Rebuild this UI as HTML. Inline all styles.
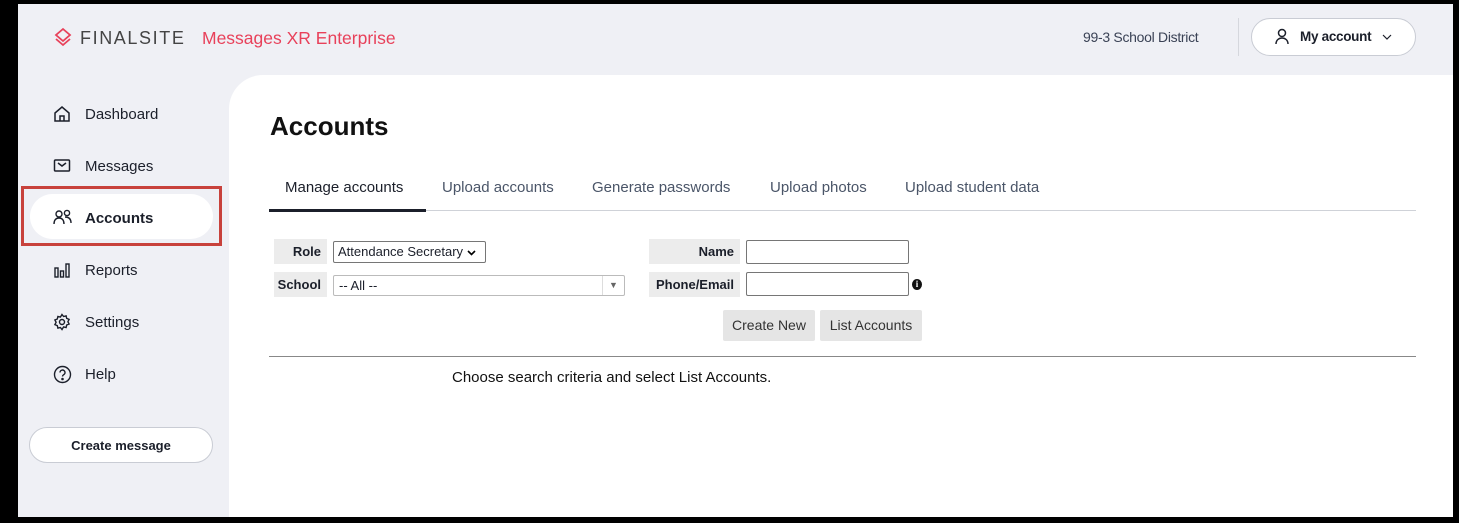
<!DOCTYPE html>
<html><head><meta charset="utf-8"><style>
*{box-sizing:border-box;margin:0;padding:0}
body{width:1459px;height:523px;background:#000;position:relative;overflow:hidden;font-family:"Liberation Sans",sans-serif;color:#1b1f2a}
.app{position:absolute;left:18px;top:4px;width:1435px;height:513px;background:#eff0f5}
.a{position:absolute;white-space:nowrap}
.main{position:absolute;left:229px;top:75px;width:1224px;height:442px;background:#fff;border-top-left-radius:34px}
.nav{position:absolute;left:53px;font-size:15px;color:#1b1f2a}
.nav svg{position:absolute;left:0;top:0}
.nav span{position:absolute;left:32px;top:1px}
.lbl{position:absolute;background:#ececec;font-weight:bold;font-size:13px;text-align:right;padding-right:6px;line-height:25px;height:25px}
.inp{position:absolute;border:1px solid #767676;border-radius:2px;background:#fff;height:24px}
.btn{position:absolute;background:#e5e5e5;font-size:14px;color:#333;height:31px;line-height:31px;text-align:center;border-radius:2px}
.tab{position:absolute;top:179px;font-size:15px;color:#4a5568}
</style></head><body>
<div class="app"></div>
<!-- header -->
<svg class="a" style="left:53px;top:27px" width="20" height="21" viewBox="0 0 20 21" fill="none" stroke="#e8415a" stroke-width="1.8"><path d="M10 2L17 8 10 14 3 8Z"/><path d="M3 12L10 18 17 12"/></svg>
<div class="a" style="left:80px;top:28px;font-size:18px;letter-spacing:1.6px;color:#444">FINALSITE</div>
<div class="a" style="left:202px;top:28px;font-size:17.5px;color:#e8415a">Messages XR Enterprise</div>
<div class="a" style="left:1083px;top:29px;font-size:14px;color:#3a4255;letter-spacing:-0.3px">99-3 School District</div>
<div class="a" style="left:1238px;top:18px;width:1px;height:38px;background:#d5d7dd"></div>
<div class="a" style="left:1251px;top:18px;width:165px;height:38px;border:1px solid #c9ccd4;border-radius:19px;background:#fff"></div>
<svg class="a" style="left:1274px;top:28px" width="16" height="17" viewBox="0 0 16 17" fill="none" stroke="#1b1f2a" stroke-width="1.5"><circle cx="8" cy="5" r="3.5"/><path d="M2 16c0-4 3-6 6-6s6 2 6 6"/></svg>
<div class="a" style="left:1300px;top:29px;font-size:13.5px;font-weight:bold;letter-spacing:-0.3px">My account</div>
<svg class="a" style="left:1382px;top:34px" width="10" height="6" viewBox="0 0 10 6" fill="none" stroke="#1b1f2a" stroke-width="1.2"><path d="M1 1l4 4 4-4"/></svg>
<!-- sidebar -->
<div class="nav" style="top:105px"><svg width="18" height="18" viewBox="0 0 18 18" fill="none" stroke="#1b1f2a" stroke-width="1.5"><path d="M2 8L9 2l7 6v8H2Z"/><path d="M7 16v-5h4v5"/></svg><span>Dashboard</span></div>
<div class="nav" style="top:157px"><svg width="18" height="18" viewBox="0 0 18 18" fill="none" stroke="#1b1f2a" stroke-width="1.5"><rect x="1.5" y="3" width="15" height="11" rx="1"/><path d="M5 6l4 3 4-3"/></svg><span>Messages</span></div>
<div class="a" style="left:21px;top:186px;width:201px;height:60px;border:3px solid #c8423c"></div>
<div class="a" style="left:30px;top:194px;width:183px;height:45px;background:#fff;border-radius:23px"></div>
<div class="nav" style="top:209px;font-weight:bold"><svg width="20" height="18" viewBox="0 0 20 18" fill="none" stroke="#1b1f2a" stroke-width="1.4"><circle cx="6" cy="5" r="3"/><circle cx="14" cy="4" r="2.6"/><path d="M1 15c0-4 2-6 5-6s5 2 5 6"/><path d="M12 8c3 0 6 1 6 6"/></svg><span>Accounts</span></div>
<div class="nav" style="top:261px"><svg width="18" height="18" viewBox="0 0 18 18" fill="none" stroke="#1b1f2a" stroke-width="1.4"><rect x="2" y="7" width="3" height="9"/><rect x="7.5" y="10" width="3" height="6"/><rect x="13" y="3" width="3" height="13"/></svg><span>Reports</span></div>
<div class="nav" style="top:313px"><svg width="18" height="18" viewBox="0 0 18 18" fill="none" stroke="#1b1f2a" stroke-width="1.4"><circle cx="9" cy="9" r="2.5"/><path d="M9 1.5l1.6 2 2.5-.6.6 2.5 2.4 1-1.2 2.3 1.2 2.3-2.4 1-.6 2.5-2.5-.6L9 16.5l-1.6-2-2.5.6-.6-2.5-2.4-1L3.1 9.3 1.9 7l2.4-1 .6-2.5 2.5.6Z"/></svg><span>Settings</span></div>
<div class="nav" style="top:365px"><svg width="19" height="19" viewBox="0 0 19 19" fill="none" stroke="#1b1f2a" stroke-width="1.4"><circle cx="9.5" cy="9.5" r="8"/><path d="M7 7.5a2.5 2.5 0 1 1 3.5 2.3c-.7.4-1 .8-1 1.7"/><circle cx="9.5" cy="14" r=".6" fill="#1b1f2a"/></svg><span>Help</span></div>
<div class="a" style="left:29px;top:427px;width:184px;height:36px;border:1px solid #c9ccd4;border-radius:18px;background:#fff;text-align:center;line-height:35px;font-size:13px;font-weight:bold">Create message</div>
<!-- main -->
<div class="main"></div>
<div class="a" style="left:270px;top:111px;font-size:26px;font-weight:bold;color:#111">Accounts</div>
<div class="tab" style="left:285px;color:#1b1f2a">Manage accounts</div>
<div class="tab" style="left:442px">Upload accounts</div>
<div class="tab" style="left:592px">Generate passwords</div>
<div class="tab" style="left:770px">Upload photos</div>
<div class="tab" style="left:905px">Upload student data</div>
<div class="a" style="left:269px;top:210px;width:1147px;height:1px;background:#cfd2d8"></div>
<div class="a" style="left:269px;top:209px;width:157px;height:3px;background:#1b1f2a"></div>
<div class="lbl" style="left:274px;top:239px;width:53px">Role</div>
<div class="inp" style="left:333px;top:241px;width:153px;height:22px;font-size:13px;line-height:20px;padding-left:4px">Attendance Secretary <svg width="9" height="6" viewBox="0 0 9 6" fill="none" stroke="#000" stroke-width="1.6"><path d="M1 1l3.5 3.5L8 1"/></svg></div>
<div class="lbl" style="left:274px;top:272px;width:53px">School</div>
<div class="inp" style="left:333px;top:275px;width:292px;height:21px;border-color:#bbb;font-size:13px;line-height:19px;padding-left:5px">-- All --<span style="position:absolute;right:0;top:0;width:22px;height:19px;border-left:1px solid #ddd;text-align:center;font-size:9px;color:#666">▼</span></div>
<div class="lbl" style="left:649px;top:239px;width:91px">Name</div>
<div class="inp" style="left:746px;top:240px;width:163px"></div>
<div class="lbl" style="left:649px;top:272px;width:91px">Phone/Email</div>
<div class="inp" style="left:746px;top:272px;width:163px"></div>
<div class="a" style="left:912px;top:279px;width:10px;height:11px;border-radius:50%;background:#111;color:#fff;font-size:9px;font-weight:bold;text-align:center;line-height:11px;font-family:'Liberation Serif',serif">i</div>
<div class="btn" style="left:723px;top:310px;width:92px">Create New</div>
<div class="btn" style="left:820px;top:310px;width:102px">List Accounts</div>
<div class="a" style="left:269px;top:356px;width:1147px;height:1px;background:#888"></div>
<div class="a" style="left:452px;top:369px;font-size:15px;color:#111">Choose search criteria and select List Accounts.</div>
</body></html>
